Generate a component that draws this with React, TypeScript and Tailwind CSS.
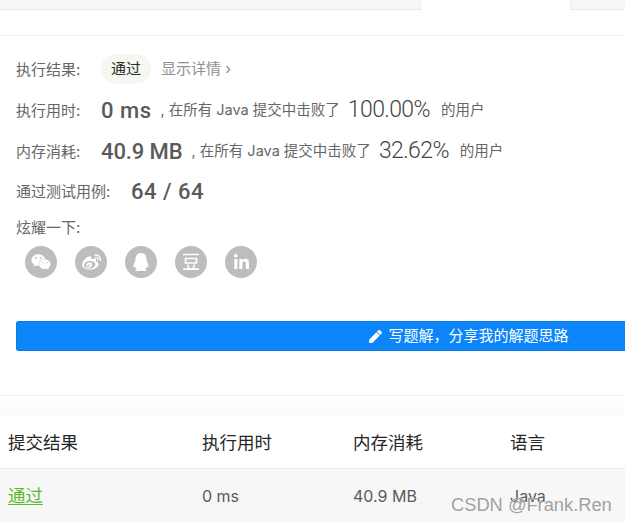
import React from "react";
import { FaWeixin, FaWeibo, FaQq, FaLinkedinIn, FaPen } from "react-icons/fa";

const font = "font-['Inter','Noto_Sans_CJK_SC',sans-serif]";

const Douban = () => (
  <svg width="18" height="18" viewBox="0 0 18 18" fill="none" stroke="white" strokeWidth="1.7">
    <path d="M1 1.5H17M3.5 5.5H14.5V10H3.5ZM5.5 11.5L7 15.5M12.5 11.5L11 15.5M1 16.2H17" />
  </svg>
);

const shares = [
  <FaWeixin key="wx" size={20} />,
  <FaWeibo key="wb" size={19} />,
  <FaQq key="qq" size={18} />,
  <Douban key="db" />,
  <FaLinkedinIn key="in" size={17} />,
];

const Big = ({ children, className = "" }: { children: React.ReactNode; className?: string }) => (
  <span className={`font-['Roboto',sans-serif] text-[22px] text-[#5a5a5a] ${className}`}>
    {children}
  </span>
);

const Label = ({ children }: { children: React.ReactNode }) => (
  <span className="text-[15px] text-[#666666]">{children}</span>
);

const StatRow = ({ label, value, percent, valueClass }: { label: string; value: string; percent: string; valueClass: string }) => (
  <div className="flex h-[40px] items-center">
    <span className="w-[85px]"><Label>{label}</Label></span>
    <Big className={`font-medium ${valueClass}`}>{value}</Big>
    <span className="ml-[9px] text-[14.5px] text-[#666666]">, 在所有 Java 提交中击败了</span>
    <Big className="ml-[8px] text-[23px] font-light tracking-[-0.6px] text-[#444444]">{percent}</Big>
    <span className="ml-[11px] text-[14.5px] text-[#666666]">的用户</span>
  </div>
);

export default function App() {
  return (
    <div className={`relative h-[522px] w-[625px] overflow-hidden bg-white ${font}`}>
      <div className="flex h-[10px]">
        <div className="w-[422px] border-b border-[#ebebeb] bg-[#f6f6f6]" />
        <div className="w-[149px] border-r border-[#ebebeb] bg-white" />
        <div className="flex-1 border-b border-[#ebebeb] bg-[#f6f6f6]" />
      </div>

      <div className="mt-[25px] border-t border-[#eeeeee] pl-4 pt-[17px]">
        <div className="flex h-[32px] items-center">
          <span className="w-[85px]"><Label>执行结果:</Label></span>
          <span className="flex h-[30px] w-[50px] items-center justify-center rounded-full bg-[#f5f8f0] text-[15px] text-[#2b2b2b]">
            通过
          </span>
          <span className="ml-[10px] text-[15px] text-[#909090]">显示详情 ›</span>
        </div>
        <div className="mt-[5px] flex flex-col gap-px">
          <StatRow label="执行用时:" value="0 ms" percent="100.00%" valueClass="tracking-[0.5px]" />
          <StatRow label="内存消耗:" value="40.9 MB" percent="32.62%" valueClass="tracking-[-0.1px]" />
        </div>
        <div className="flex h-[40px] items-center">
          <span className="w-[115px]"><Label>通过测试用例:</Label></span>
          <Big className="font-medium tracking-[0.5px]">64 / 64</Big>
        </div>
        <div className="mt-[7px] text-[15px] leading-[20px] text-[#666666]">炫耀一下:</div>
        <div className="mt-[8px] flex gap-[18px] pl-[9px]">
          {shares.map((icon, i) => (
            <span key={i} className="flex h-[32px] w-[32px] items-center justify-center rounded-full bg-[#bdbdbd] text-white">
              {icon}
            </span>
          ))}
        </div>
        <div className="mt-[43px] flex h-[30px] w-[905px] items-center justify-center gap-[6px] rounded-[3px] border-y border-l border-[#0d7adf] bg-[#0c85fb] text-[15px] text-white">
          <FaPen size={13} />
          写题解，分享我的解题思路
        </div>
      </div>

      <div className="mt-[44px] h-[20px] border-t border-[#eeeeee] bg-gradient-to-b from-white to-[#fbfbfb]" />

      <div className="grid h-[54px] grid-cols-[194px_151px_157px_1fr] items-center border-b border-[#ececec] pl-2 pt-1 text-[17.5px] text-[#262626]">
        <span>提交结果</span>
        <span>执行用时</span>
        <span>内存消耗</span>
        <span>语言</span>
      </div>
      <div className="grid h-[54px] grid-cols-[194px_151px_157px_1fr] items-center bg-[#f7f7f7] pl-2 text-[#5a5a5a]">
        <span className="text-[17.5px] text-[#5cb82a] underline underline-offset-2">通过</span>
        <span className="text-[16px]">0 ms</span>
        <span className="text-[16px]">40.9 MB</span>
        <span className="text-[16px]">Java</span>
      </div>

      <span className="absolute left-[451px] top-[494px] font-['Liberation_Sans',sans-serif] text-[18.3px] leading-[22px] text-[#a0a0a0] [text-shadow:0_0_1px_#ffffff]">
        CSDN @Frank.Ren
      </span>
    </div>
  );
}
